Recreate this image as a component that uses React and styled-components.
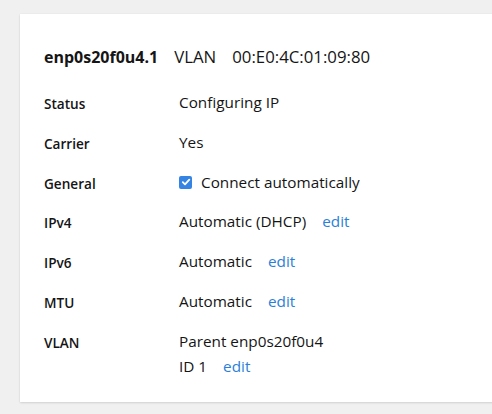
import React from "react";
import styled, { createGlobalStyle } from "styled-components";

const Global = createGlobalStyle`
  html, body { margin: 0; padding: 0; background: #f0f0f0; }
  body { font-family: "Open Sans", "Noto Sans", sans-serif; color: #151515; }
`;

const Page = styled.div`
  padding: 14px 0 0 20px;
  height: 414px;
  box-sizing: border-box;
  overflow: hidden;
`;

const Card = styled.section`
  background: #fff;
  box-shadow: 0 1px 2px rgba(0, 0, 0, 0.12), 0 0 1px rgba(0, 0, 0, 0.08);
  width: 500px;
  padding: 31px 24px 23px 24px;
  box-sizing: border-box;
`;

const Title = styled.h2`
  margin: 0 0 21px 0;
  display: flex;
  gap: 16px;
  font-size: 16.8px;
  line-height: 24px;
  font-weight: 400;
`;

const Name = styled.span`
  font-weight: 700;
  font-size: 16px;
`;

const List = styled.dl`
  margin: 0;
  display: grid;
  grid-template-columns: 135px 1fr;
  row-gap: 14.8px;
  align-items: start;
`;

const Label = styled.dt`
  font-size: 13.6px;
  font-weight: 600;
  line-height: 25px;
  padding-top: 1px;
  height: 25px;
  box-sizing: border-box;
`;

const Value = styled.dd`
  margin: 0;
  font-size: 15.3px;
  line-height: 25px;
`;

const Line = styled.div`
  display: flex;
  align-items: center;
  height: 25px;
  gap: ${(p) => p.$gap || 16}px;
`;

const Link = styled.a`
  color: #2b7fd8;
  text-decoration: none;
  cursor: pointer;
`;

const Box = styled.span`
  width: 13px;
  height: 13px;
  border-radius: 2px;
  background: #3584e4;
  display: inline-flex;
  align-items: center;
  justify-content: center;
  flex: none;
`;

function Check() {
  return (
    <Box>
      <svg width="10" height="10" viewBox="0 0 10 10">
        <path d="M1.8 5.2 L4 7.3 L8.3 2.6" fill="none" stroke="#fff" strokeWidth="1.8" strokeLinecap="round" strokeLinejoin="round" />
      </svg>
    </Box>
  );
}

export default function App() {
  return (
    <>
      <Global />
      <Page>
        <Card>
          <Title>
            <Name>enp0s20f0u4.1</Name>
            <span>VLAN</span>
            <span>00:E0:4C:01:09:80</span>
          </Title>
          <List>
            <Label>Status</Label>
            <Value>Configuring IP</Value>
            <Label>Carrier</Label>
            <Value>Yes</Value>
            <Label>General</Label>
            <Value>
              <Line $gap={9}>
                <Check />
                <span>Connect automatically</span>
              </Line>
            </Value>
            <Label>IPv4</Label>
            <Value>
              <Line>
                <span>Automatic (DHCP)</span>
                <Link>edit</Link>
              </Line>
            </Value>
            <Label>IPv6</Label>
            <Value>
              <Line>
                <span>Automatic</span>
                <Link>edit</Link>
              </Line>
            </Value>
            <Label>MTU</Label>
            <Value>
              <Line>
                <span>Automatic</span>
                <Link>edit</Link>
              </Line>
            </Value>
            <Label>VLAN</Label>
            <Value>
              <div>Parent enp0s20f0u4</div>
              <Line>
                <span>ID 1</span>
                <Link>edit</Link>
              </Line>
            </Value>
          </List>
        </Card>
      </Page>
    </>
  );
}
